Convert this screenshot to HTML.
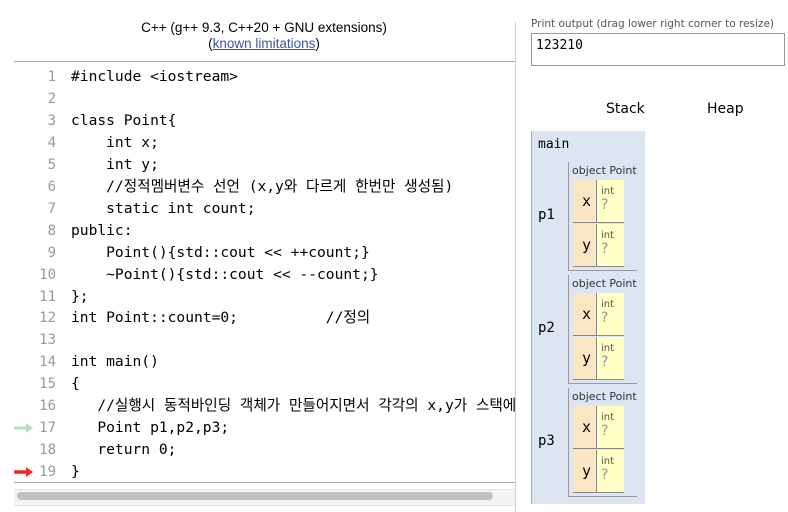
<!DOCTYPE html>
<html><head><meta charset="utf-8"><style>
body{margin:0;width:788px;height:512px;background:#fff;position:relative;overflow:hidden;font-family:"Liberation Sans","DejaVu Sans",sans-serif}
.a{position:absolute}
.hdr{left:14px;width:500px;text-align:center;font-size:13.5px;color:#000}
.code{left:14px;top:66px;width:501px;height:416px;overflow:hidden}
.ln{position:absolute;left:0;height:22px;line-height:22px;font-family:"DejaVu Sans Mono","Noto Sans CJK KR",monospace;font-size:14.6px;white-space:pre}
.num{width:42px;text-align:right;color:#999;font-size:14px}
.txt{left:57px;color:#000}
.cell{position:absolute;box-sizing:border-box}
.nm{background:#fae6c2;border-bottom:1px solid #888;border-right:1px solid #888;font-family:"DejaVu Sans Mono",monospace;font-size:15px;text-align:right;padding-right:5px;line-height:42px}
.vl{background:#ffffc6;border-bottom:1px solid #888;font-family:"DejaVu Sans",sans-serif;font-size:10px;color:#555;padding:6px 0 0 4px;line-height:11px}
.vl b{display:block;font-weight:normal;font-size:14px;color:#999;margin-top:3px}
</style></head><body>
<div class="a hdr" style="top:20px">C++ (g++ 9.3, C++20 + GNU extensions)</div>
<div class="a hdr" style="top:36px">(<span style="color:#3a55a6;text-decoration:underline">known limitations</span>)</div>
<div class="a" style="left:14px;top:61px;width:501px;height:1px;background:#aaa"></div>
<div class="a" style="left:515px;top:22px;width:1px;height:490px;background:#ccc"></div>
<div class="a code">
<div id="c"></div>
</div>
<script>
var L=["#include <iostream>","","class Point{","    int x;","    int y;","    //정적멤버변수 선언 (x,y와 다르게 한번만 생성됨)","    static int count;","public:","    Point(){std::cout << ++count;}","    ~Point(){std::cout << --count;}","};","int Point::count=0;          //정의","","int main()","{","   //실행시 동적바인딩 객체가 만들어지면서 각각의 x,y가 스택에 할당","   Point p1,p2,p3;","   return 0;","}"];
var h="";for(var i=0;i<L.length;i++){var t=i*21.95;h+='<div class="ln num" style="top:'+t+'px">'+(i+1)+'</div><div class="ln txt" style="top:'+t+'px">'+L[i].replace(/</g,"&lt;")+'</div>';}
document.getElementById("c").innerHTML=h;
</script>
<div class="a" style="left:14px;top:482px;width:501px;height:1px;background:#aaa"></div>
<div class="a" style="left:14px;top:489px;width:501px;height:15px;background:#f4f4f4;border-top:1px solid #e4e4e4;border-bottom:1px solid #e4e4e4"></div>
<div class="a" style="left:17px;top:492px;width:476px;height:8px;background:#c1c1c1;border-radius:4px"></div>
<svg class="a" style="left:14px;top:421px" width="22" height="14"><path d="M0 7H13" stroke="#b7dcb7" stroke-width="3"/><path d="M12 2L19 7L12 12Z" fill="#b7dcb7"/></svg>
<svg class="a" style="left:14px;top:465px" width="22" height="14"><path d="M0 7H13" stroke="#e8282b" stroke-width="3.5"/><path d="M12 2L19 7L12 12Z" fill="#e8282b"/></svg>
<div class="a" style="left:531px;top:18px;font-size:10.5px;color:#555;font-family:'DejaVu Sans',sans-serif;white-space:nowrap">Print output (drag lower right corner to resize)</div>
<div class="a" style="left:531px;top:33px;width:254px;height:33px;box-sizing:border-box;border:1px solid #999;font-family:'DejaVu Sans Mono',monospace;font-size:13px;padding:4px 0 0 4px">123210</div>
<div class="a" style="left:606px;top:101px;font-size:14px;font-family:'DejaVu Sans',sans-serif">Stack</div>
<div class="a" style="left:707px;top:101px;font-size:14px;font-family:'DejaVu Sans',sans-serif">Heap</div>
<div class="a" style="left:531px;top:131px;width:113px;height:373px;background:#dce6f2;border-left:1px solid #aaa"></div>
<div class="a" style="left:538px;top:137px;font-family:'DejaVu Sans Mono',monospace;font-size:13px">main</div>
<div id="o"></div>
<script>
var o="";var tops=[162,275,388],nm=["p1","p2","p3"];
for(var k=0;k<3;k++){var t=tops[k];
o+='<div class="a" style="left:538px;top:'+(t+45)+'px;font-family:DejaVu Sans Mono,monospace;font-size:14px">'+nm[k]+'</div>';
o+='<div class="a" style="left:568px;top:'+t+'px;width:68px;height:108px;border-left:1px solid #999;border-bottom:1px solid #999"></div>';
o+='<div class="a" style="left:572px;top:'+(t+2)+'px;font-size:11px;color:#333;font-family:DejaVu Sans,sans-serif">object Point</div>';
["x","y"].forEach(function(v,j){var y=t+18+j*44;
o+='<div class="cell nm" style="left:573px;top:'+y+'px;width:24px;height:43px">'+v+'</div>';
o+='<div class="cell vl" style="left:597px;top:'+y+'px;width:27px;height:43px">int<b>?</b></div>';});}
document.getElementById("o").innerHTML=o;
</script>
</body></html>
